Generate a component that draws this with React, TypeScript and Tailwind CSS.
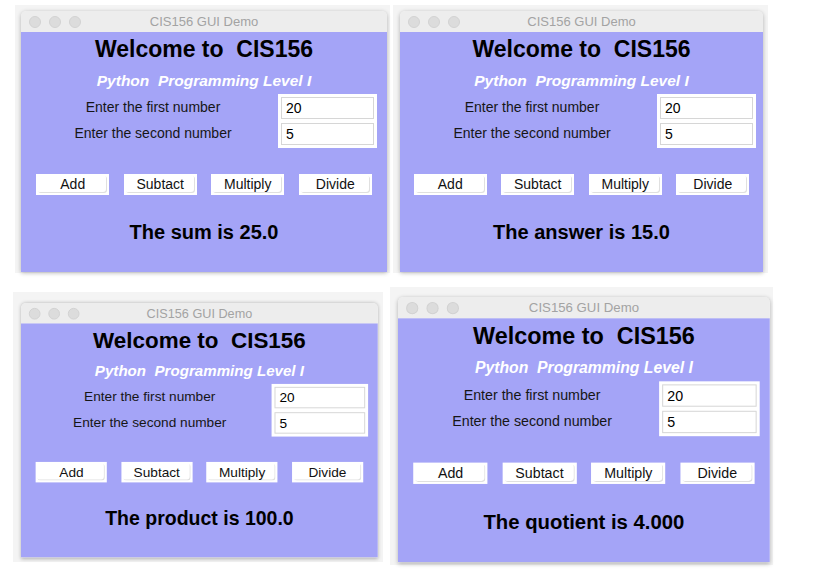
import React from "react";

type WinProps = { result: string; sizeClass: string; scaleClass: string };

function Window({ result, sizeClass, scaleClass }: WinProps) {
  return (
    <div
      className={`${sizeClass} h-[261px] origin-top-left ${scaleClass} flex flex-col rounded-t-[5px] overflow-hidden shadow-[0_1px_4px_rgba(0,0,0,0.28)]`}
    >
      <div className="h-[21px] shrink-0 bg-[#ededed] grid grid-cols-[1fr_auto_1fr] items-center px-[8px]">
        <div className="flex gap-[8px]">
          <span className="w-[12px] h-[12px] rounded-full bg-[#dcdcdc] border border-[#d2d2d2]" />
          <span className="w-[12px] h-[12px] rounded-full bg-[#dcdcdc] border border-[#d2d2d2]" />
          <span className="w-[12px] h-[12px] rounded-full bg-[#dcdcdc] border border-[#d2d2d2]" />
        </div>
        <span className="text-[13px] leading-[21px] text-[#a3a3a3] font-['Liberation_Sans',Arial,sans-serif]">
          CIS156 GUI Demo
        </span>
        <div />
      </div>
      <div className="flex-1 bg-[#a4a4f7] flex flex-col items-center pt-[6px] font-['Liberation_Sans',Arial,sans-serif]">
        <div className="text-[23px] leading-[23px] font-bold text-black whitespace-pre">
          {"Welcome to  CIS156"}
        </div>
        <div className="mt-[12px] text-[15.5px] leading-[16px] font-bold italic text-white whitespace-pre">
          {"Python  Programming Level I"}
        </div>
        <div className="mt-[5px] flex justify-start pl-[7px] w-full">
          <div className="w-[250px] flex flex-col pt-[2px] gap-[4px]">
            <div className="h-[22px] flex items-center justify-center text-[14px] text-[#161616]">
              Enter the first number
            </div>
            <div className="h-[22px] flex items-center justify-center text-[14px] text-[#161616]">
              Enter the second number
            </div>
          </div>
          <div className="w-[99px] bg-white p-[3px] flex flex-col gap-[4px]">
            <div className="h-[22px] border border-[#d6d6d6] bg-white flex items-center px-[4px] text-[14px] text-black">
              20
            </div>
            <div className="h-[22px] border border-[#d6d6d6] bg-white flex items-center px-[4px] text-[14px] text-black">
              5
            </div>
          </div>
        </div>
        <div className="mt-[26px] flex justify-center gap-[14.5px]">
          {["Add", "Subtact", "Multiply", "Divide"].map((b) => (
            <div key={b} className="w-[73px] h-[21px] bg-white p-[2px]">
              <div className="h-full rounded-[3px] shadow-[inset_-1px_-1px_0_#e0e0e0] flex items-center justify-center text-[14px] text-[#111]">
                {b}
              </div>
            </div>
          ))}
        </div>
        <div className="mt-[27px] text-[20px] leading-[20px] font-bold text-black">
          {result}
        </div>
      </div>
    </div>
  );
}

export default function App() {
  return (
    <div className="relative w-[815px] h-[572px] bg-white overflow-hidden">
      <div className="absolute left-[15px] top-[5px] w-[375px] h-[268px] bg-[#f4f4f4] pl-[6px] pt-[6px]">
        <Window result="The sum is 25.0" sizeClass="w-[366px]" scaleClass="scale-100" />
      </div>
      <div className="absolute left-[393px] top-[5px] w-[375px] h-[268px] bg-[#f4f4f4] pl-[7px] pt-[6px]">
        <Window result="The answer is 15.0" sizeClass="w-[363px]" scaleClass="scale-100" />
      </div>
      <div className="absolute left-[13px] top-[292px] w-[370px] h-[270px] bg-[#f4f4f4] pl-[8px] pt-[11px]">
        <Window result="The product is 100.0" sizeClass="w-[366px]" scaleClass="scale-[0.975]" />
      </div>
      <div className="absolute left-[390px] top-[287px] w-[383px] h-[278px] bg-[#f4f4f4] pl-[8px] pt-[10px]">
        <Window result="The quotient is 4.000" sizeClass="w-[366px]" scaleClass="scale-[1.016]" />
      </div>
    </div>
  );
}
